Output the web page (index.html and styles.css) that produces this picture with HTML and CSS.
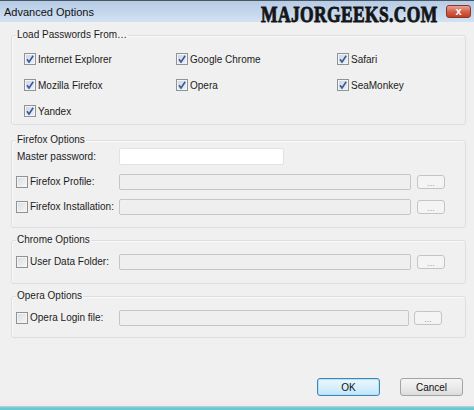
FILE: index.html
```html
<!DOCTYPE html>
<html lang="en">
<head>
  <meta charset="UTF-8" />
  <title>Advanced Options</title>
  <link rel="stylesheet" href="styles.css">
</head>
<body>
  <div class="window">
    <div class="titlebar">
      <span class="title">Advanced Options</span>
      <span class="watermark">MAJORGEEKS.COM</span>
      <span class="close">x</span>
    </div>

    <div class="content">
      <fieldset class="group">
        <legend>Load Passwords From…</legend>
        <div class="sources">
          <label class="check"><span class="box on"><svg viewBox="0 0 10 10"><path d="M2 5.2 L4 8 L8.2 1.8"/></svg></span>Internet Explorer</label>
          <label class="check"><span class="box on"><svg viewBox="0 0 10 10"><path d="M2 5.2 L4 8 L8.2 1.8"/></svg></span>Google Chrome</label>
          <label class="check"><span class="box on"><svg viewBox="0 0 10 10"><path d="M2 5.2 L4 8 L8.2 1.8"/></svg></span>Safari</label>
          <label class="check"><span class="box on"><svg viewBox="0 0 10 10"><path d="M2 5.2 L4 8 L8.2 1.8"/></svg></span>Mozilla Firefox</label>
          <label class="check"><span class="box on"><svg viewBox="0 0 10 10"><path d="M2 5.2 L4 8 L8.2 1.8"/></svg></span>Opera</label>
          <label class="check"><span class="box on"><svg viewBox="0 0 10 10"><path d="M2 5.2 L4 8 L8.2 1.8"/></svg></span>SeaMonkey</label>
          <label class="check"><span class="box on"><svg viewBox="0 0 10 10"><path d="M2 5.2 L4 8 L8.2 1.8"/></svg></span>Yandex</label>
        </div>
      </fieldset>

      <fieldset class="group firefox">
        <legend>Firefox Options</legend>
        <div class="rows">
          <div class="row">
            <span class="label plain">Master password:</span>
            <span class="field password"></span>
          </div>
          <div class="row">
            <label class="check label"><span class="box"></span>Firefox Profile:</label>
            <span class="field"></span>
            <span class="browse">...</span>
          </div>
          <div class="row">
            <label class="check label"><span class="box"></span>Firefox Installation:</label>
            <span class="field"></span>
            <span class="browse">...</span>
          </div>
        </div>
      </fieldset>

      <fieldset class="group chrome">
        <legend>Chrome Options</legend>
        <div class="row">
          <label class="check label"><span class="box"></span>User Data Folder:</label>
          <span class="field"></span>
          <span class="browse">...</span>
        </div>
      </fieldset>

      <fieldset class="group opera">
        <legend>Opera Options</legend>
        <div class="row">
          <label class="check label"><span class="box"></span>Opera Login file:</label>
          <span class="field"></span>
          <span class="browse">...</span>
        </div>
      </fieldset>

      <div class="actions">
        <button class="btn default">OK</button>
        <button class="btn">Cancel</button>
      </div>
    </div>

    <div class="taskbar"></div>
  </div>
</body>
</html>
```

FILE: styles.css
```css
body {
  margin: 0;
  font-family: "Liberation Sans", Arial, sans-serif;
  font-size: 10px;
  color: #1b1b1b;
  background: #f0f0f0;
}

.window {
  position: relative;
  width: 474px;
  height: 410px;
  display: flex;
  flex-direction: column;
  background: #f0f0f0;
  overflow: hidden;
}

.titlebar {
  height: 21px;
  border-top: 1px solid #4a5562;
  background: linear-gradient(#b6cce6, #c6d8ed 60%, #d4e2f2);
  display: flex;
  align-items: center;
  padding-left: 4px;
}

.title {
  font-size: 11px;
  color: #111;
}

.watermark {
  position: absolute;
  left: 261px;
  top: 2px;
  font-family: "Liberation Serif", "Times New Roman", serif;
  font-weight: bold;
  font-size: 23px;
  letter-spacing: 0.5px;
  color: #151515;
  -webkit-text-stroke: 0.9px #151515;
  transform: scaleX(0.76);
  transform-origin: left top;
}

.close {
  position: absolute;
  left: 446px;
  top: 5px;
  width: 25px;
  height: 13px;
  box-sizing: border-box;
  border: 1px solid #8b3427;
  border-radius: 3px;
  background: linear-gradient(#e8a294, #d3624d 50%, #c23d25);
  color: #fff;
  font-weight: bold;
  font-size: 11px;
  line-height: 10px;
  text-align: center;
}

.content {
  padding-top: 7px;
}

.group {
  box-sizing: border-box;
  width: 455px;
  margin: 0 0 0 11px;
  padding: 0 4px;
  border: 1px solid #d9dfe3;
  border-radius: 3px;
  box-shadow: inset 1px 1px 0 #fafafa;
}

.group + .group {
  margin-top: 6px;
}

.group.firefox {
  margin-top: 9px;
}

.group legend {
  padding: 0 1px;
  line-height: 12px;
}

.sources {
  display: grid;
  grid-template-columns: 152px 161px 1fr;
  row-gap: 12px;
  margin: 11px 0 6px 8px;
}

.check {
  display: flex;
  align-items: center;
  gap: 2px;
  height: 14px;
}

.box {
  width: 12px;
  height: 12px;
  box-sizing: border-box;
  border: 1px solid #8f9398;
  background: linear-gradient(135deg, #dcdcdc, #f7f7f7);
  box-shadow: inset 0 0 0 1px #f4f4f4;
  flex-shrink: 0;
}

.box.on {
  background: linear-gradient(135deg, #c9d6e6, #eef2f7);
}

.box svg {
  display: block;
  width: 10px;
  height: 10px;
}

.box path {
  fill: none;
  stroke: #3a5b98;
  stroke-width: 1.6;
}

.rows {
  display: flex;
  flex-direction: column;
  gap: 8px;
  padding: 2px 0 12px;
}

.chrome .row {
  margin: 7px 0 13px;
}

.opera .row {
  margin: 7px 0 11px;
}

.row {
  display: flex;
  align-items: center;
  height: 17px;
}

.label {
  width: 103px;
  flex-shrink: 0;
}

.label.plain {
  padding-left: 1px;
  box-sizing: border-box;
}

.field {
  width: 292px;
  height: 16px;
  box-sizing: border-box;
  border: 1px solid #c6c6c6;
  border-radius: 2px;
  background: #efefef;
}

.field.password {
  width: 165px;
  height: 17px;
  border-color: #e2e2e2;
  background: #fff;
}

.opera .field {
  width: 290px;
}

.browse {
  width: 28px;
  height: 14px;
  margin-left: 6px;
  box-sizing: border-box;
  border: 1px solid #c4c4c4;
  border-radius: 3px;
  background: #f4f4f4;
  color: #9a9a9a;
  font-size: 9px;
  line-height: 14px;
  text-align: center;
}

.opera .browse {
  margin-left: 5px;
}

.actions {
  display: flex;
  justify-content: flex-end;
  gap: 20px;
  margin-top: 40px;
  padding-right: 11px;
}

.btn {
  width: 63px;
  height: 18px;
  padding: 0;
  border: 1px solid #a3a3a3;
  border-radius: 3px;
  background: linear-gradient(#f4f4f4, #ebebeb 50%, #dcdcdc);
  font-family: "Liberation Sans", Arial, sans-serif;
  font-size: 10px;
  color: #111;
}

.btn.default {
  border-color: #3f86b8;
  background: linear-gradient(#eaf6fd, #d9f0fc 50%, #bee6fd);
  box-shadow: inset 0 0 0 1px #b9e0f5;
}

.taskbar {
  margin-top: auto;
  height: 8px;
  background: linear-gradient(#f6e8ec 0, #f6e8ec 4px, #a9dfe6 4px, #6ec6d1 6px);
}
```
